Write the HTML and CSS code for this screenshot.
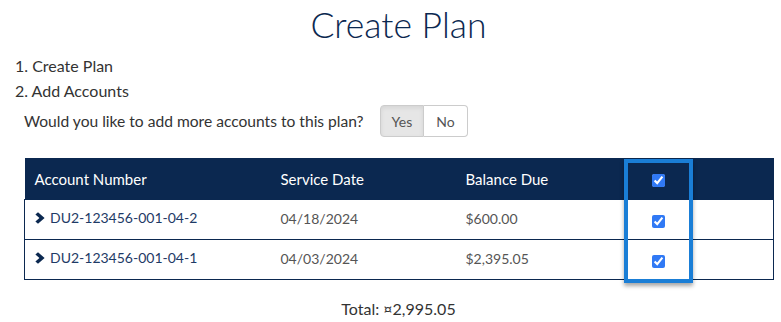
FILE: index.html
```html
<!DOCTYPE html>
<html lang="en">
  <head>
    <meta charset="UTF-8" />
    <meta name="viewport" content="width=device-width, initial-scale=1.0" />
    <title>Create Plan</title>
    <link rel="stylesheet" href="styles.css">
  </head>
  <body>
    <h1 class="page-title">Create Plan</h1>

    <ol class="steps">
      <li>1. Create Plan</li>
      <li>2. Add Accounts</li>
    </ol>

    <div class="question">
      <span>Would you like to add more accounts to this plan?</span>
      <div class="btn-group">
        <button class="btn active">Yes</button>
        <button class="btn">No</button>
      </div>
    </div>

    <div class="table-wrap">
      <table class="accounts">
        <thead>
          <tr>
            <th class="col-account">Account Number</th>
            <th class="col-date">Service Date</th>
            <th class="col-balance">Balance Due</th>
            <th class="col-check"><input type="checkbox" checked></th>
            <th></th>
          </tr>
        </thead>
        <tbody>
          <tr>
            <td>
              <a class="acct-link" href="#">
                <svg class="chev" viewBox="0 0 10 12"><path d="M3 0.2 L9.6 6 L3 11.8 L0.4 9.4 L4.4 6 L0.4 2.6 Z" fill="#0b2850"/></svg>
                DU2-123456-001-04-2
              </a>
            </td>
            <td>04/18/2024</td>
            <td>$600.00</td>
            <td class="col-check"><input type="checkbox" checked></td>
            <td></td>
          </tr>
          <tr>
            <td>
              <a class="acct-link" href="#">
                <svg class="chev" viewBox="0 0 10 12"><path d="M3 0.2 L9.6 6 L3 11.8 L0.4 9.4 L4.4 6 L0.4 2.6 Z" fill="#0b2850"/></svg>
                DU2-123456-001-04-1
              </a>
            </td>
            <td>04/03/2024</td>
            <td>$2,395.05</td>
            <td class="col-check"><input type="checkbox" checked></td>
            <td></td>
          </tr>
        </tbody>
      </table>
      <!-- highlight around the select column -->
      <div class="highlight"></div>
    </div>

    <p class="total">Total: &#164;2,995.05</p>
  </body>
</html>
```

FILE: styles.css
```css
body {
  margin: 0;
  padding: 0;
  font-family: Lato, "Open Sans", sans-serif;
  font-size: 16px;
  color: #333;
  background: #fff;
}
.page-title {
  margin: 0;
  padding: 3px 0 0 16px;
  text-align: center;
  font-size: 35.5px;
  font-weight: 300;
  line-height: 44px;
  color: #0b2850;
}
.steps {
  list-style: none;
  margin: 6px 0 0;
  padding: 0 0 0 15px;
}
.steps li {
  line-height: 25px;
}
.question {
  display: flex;
  align-items: center;
  gap: 16px;
  margin: 2px 0 0 24px;
  font-size: 15.6px;
}
.btn-group {
  display: flex;
}
.btn {
  font-family: inherit;
  font-size: 14px;
  color: #555;
  background: #fff;
  border: 1px solid #ccc;
  height: 32px;
  padding: 0 11px;
  margin: 0;
}
.btn:first-child {
  border-radius: 4px 0 0 4px;
}
.btn:last-child {
  border-radius: 0 4px 4px 0;
  border-left: none;
  padding: 0 12px;
}
.btn.active {
  background: #e6e6e6;
  box-shadow: inset 0 2px 4px rgba(0, 0, 0, 0.08);
}
.table-wrap {
  position: relative;
  margin: 21px 7px 0 24px;
}
.accounts {
  width: 100%;
  border-collapse: collapse;
  table-layout: fixed;
}
.accounts th {
  background: #0b2850;
  color: #fff;
  font-weight: 400;
  font-size: 15px;
  text-align: left;
  height: 41px;
  padding: 0 10px;
}
.accounts td {
  height: 36px;
  padding: 0 10px 3px;
  font-size: 14px;
  color: #555;
  border-top: 1px solid #0b2850;
  border-bottom: 1px solid #0b2850;
}
.accounts tr td:first-child {
  border-left: 1px solid #0b2850;
}
.accounts tr td:last-child {
  border-right: 1px solid #0b2850;
}
.col-account { width: 226px; }
.col-date { width: 165px; }
.col-balance { width: 151px; }
.accounts .col-check {
  width: 63px;
  text-align: center;
  padding: 0;
}
.accounts td.col-check {
  padding-top: 1px;
}
.accounts input[type="checkbox"] {
  width: 13px;
  height: 13px;
  margin: 0;
  accent-color: #3079f5;
  vertical-align: middle;
}
.acct-link {
  color: #1e3a66;
  text-decoration: none;
  display: inline-flex;
  align-items: center;
  gap: 5px;
}
.chev {
  width: 10px;
  height: 12px;
}
.highlight {
  position: absolute;
  left: 600px;
  top: 1px;
  width: 61px;
  height: 116px;
  border: 4px solid #1a7ed6;
  box-shadow: 0 3px 4px rgba(0, 0, 0, 0.35);
}
.total {
  margin: 19px 0 0;
  padding-left: 16px;
  text-align: center;
  font-size: 16px;
  color: #333;
}
```
